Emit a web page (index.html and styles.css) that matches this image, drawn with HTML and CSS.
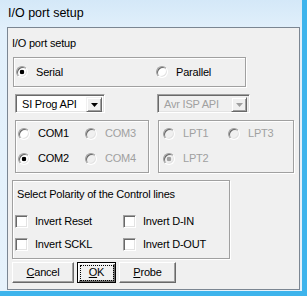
FILE: index.html
```html
<!DOCTYPE html>
<html>
<head>
<meta charset="utf-8">
<title>I/O port setup</title>
<link rel="stylesheet" href="styles.css">
</head>
<body>
<div class="window">
  <div class="titlebar">I/O port setup</div>
  <div class="client">
    <div class="caption">I/O port setup</div>
    <div class="panel mode">
      <div class="opt serial"><span class="radio checked"></span>Serial</div>
      <div class="opt"><span class="radio"></span>Parallel</div>
    </div>
    <div class="combos">
      <div class="combo si">
        <span class="val">SI Prog API</span>
        <span class="cbtn"><svg width="7" height="4" viewBox="0 0 7 4"><path d="M0 0h7L3.5 4z" fill="#000"/></svg></span>
      </div>
      <div class="combo avr disabled">
        <span class="val">Avr ISP API</span>
        <span class="cbtn"><svg width="7" height="4" viewBox="0 0 7 4"><path d="M0 0h7L3.5 4z" fill="#a0a0a0"/></svg></span>
      </div>
    </div>
    <div class="groups">
      <div class="panel ports com">
        <div class="opt"><span class="radio"></span>COM1</div>
        <div class="opt dis"><span class="radio"></span>COM3</div>
        <div class="opt"><span class="radio checked"></span>COM2</div>
        <div class="opt dis"><span class="radio"></span>COM4</div>
      </div>
      <div class="panel ports lpt">
        <div class="opt dis"><span class="radio"></span>LPT1</div>
        <div class="opt dis"><span class="radio"></span>LPT3</div>
        <div class="opt dis"><span class="radio checked"></span>LPT2</div>
      </div>
    </div>
    <div class="panel polarity">
      <div class="ptitle">Select Polarity of the Control lines</div>
      <div class="checks">
        <div class="chk"><span class="box"></span>Invert Reset</div>
        <div class="chk"><span class="box"></span>Invert D-IN</div>
        <div class="chk"><span class="box"></span>Invert SCKL</div>
        <div class="chk"><span class="box"></span>Invert D-OUT</div>
      </div>
    </div>
    <div class="buttons">
      <div class="btn cancel"><span><u>C</u>ancel</span></div>
      <div class="btn ok"><span class="focus"><u>O</u>K</span></div>
      <div class="btn probe"><span><u>P</u>robe</span></div>
    </div>
  </div>
</div>
</body>
</html>
```
FILE: styles.css
```css
* { box-sizing: border-box; }
html, body { margin: 0; padding: 0; }
body {
  width: 307px;
  height: 296px;
  overflow: hidden;
  background: #dcecf8;
  font-family: "Liberation Sans", Arial, sans-serif;
  color: #000;
}
.window {
  width: 307px;
  height: 296px;
  display: flex;
  flex-direction: column;
  padding: 0 2px 1px 7px;
  background: linear-gradient(#d4e8f8, #e2f0fb 30px, #e6f2fb);
  border-right: 5px solid #3eb4ec;
  border-bottom: 5px solid #3eb4ec;
}
.titlebar {
  height: 27px;
  flex: none;
  padding: 6px 0 0 1px;
  font-size: 12.5px;
  line-height: 15px;
}
.client {
  height: 263px;
  flex: none;
  border: 1px solid #7b8692;
  background: #f0f0f0;
  display: flex;
  flex-direction: column;
  align-items: flex-start;
  font-size: 11px;
  line-height: 13px;
  letter-spacing: -0.2px;
}
.caption { margin: 9px 0 0 4px; }
.panel {
  border: 1px solid #a0a0a0;
  box-shadow: inset 1px 1px 0 #fff, 1px 1px 0 #fff;
}
.mode {
  margin: 7px 0 0 5px;
  width: 233px;
  height: 30px;
  display: flex;
  align-items: center;
  padding-left: 2px;
}
.mode .serial { width: 140px; }
.opt { display: flex; align-items: center; white-space: nowrap; }
.opt.dis { color: #a0a0a0; }
.radio {
  flex: none;
  width: 12px;
  height: 12px;
  margin-right: 8px;
  border-radius: 50%;
  border: 1px solid;
  border-color: #a0a0a0 #fff #fff #a0a0a0;
  box-shadow: inset 1px 1px 0 #696969, inset -1px -1px 0 #e3e3e3;
  background: #fff;
}
.radio.checked { background: radial-gradient(circle at center, #000 2px, #fff 2.6px); }
.dis .radio { background: #f0f0f0; }
.dis .radio.checked { background: radial-gradient(circle at center, #a0a0a0 2px, #f0f0f0 2.6px); }
.combos { margin: 7px 0 0 7px; display: flex; gap: 52px; }
.combo {
  height: 19px;
  width: 90px;
  display: flex;
  padding: 2px;
  background: #fff;
  border: 1px solid;
  border-color: #a0a0a0 #fff #fff #a0a0a0;
  box-shadow: inset 1px 1px 0 #696969, inset -1px -1px 0 #e3e3e3;
}
.combo.avr { width: 93px; }
.combo.disabled { background: #f0f0f0; color: #a0a0a0; }
.val { flex: 1; padding-left: 4px; line-height: 14px; white-space: nowrap; }
.cbtn {
  flex: none;
  width: 16px;
  height: 15px;
  display: flex;
  align-items: center;
  justify-content: center;
  background: #f0f0f0;
  border: 1px solid;
  border-color: #f0f0f0 #696969 #696969 #f0f0f0;
  box-shadow: inset 1px 1px 0 #fff, inset -1px -1px 0 #a0a0a0;
}
.cbtn svg { display: block; }
.groups { margin: 7px 0 0 7px; display: flex; gap: 9px; }
.ports {
  height: 53px;
  display: grid;
  grid-template-rows: 25px 25px;
  align-items: center;
}
.com { width: 134px; grid-template-columns: 67px auto; padding-left: 2px; }
.lpt { width: 136px; grid-template-columns: 65px auto; padding-left: 4px; }
.polarity {
  margin: 7px 0 0 4px;
  width: 218px;
  height: 79px;
  padding: 7px 0 0 2px;
}
.ptitle { padding-left: 2px; white-space: nowrap; }
.checks {
  margin-top: 14px;
  display: grid;
  grid-template-columns: 108px auto;
  row-gap: 10px;
}
.chk { display: flex; align-items: center; height: 13px; white-space: nowrap; }
.box {
  flex: none;
  width: 13px;
  height: 13px;
  margin-right: 7px;
  background: #fff;
  border: 1px solid;
  border-color: #a0a0a0 #fff #fff #a0a0a0;
  box-shadow: inset 1px 1px 0 #696969, inset -1px -1px 0 #e3e3e3;
}
.buttons { margin: 3px 0 0 4px; display: flex; gap: 3px; }
.btn {
  height: 21px;
  display: flex;
  align-items: center;
  justify-content: center;
  background: #f0f0f0;
  border: 1px solid;
  border-color: #fff #696969 #696969 #fff;
  box-shadow: inset -1px -1px 0 #a0a0a0;
}
.cancel { width: 62px; }
.probe { width: 57px; }
.ok {
  width: 39px;
  border: 1px solid #000;
  box-shadow: inset 1px 1px 0 #fff, inset -1px -1px 0 #696969, inset -2px -2px 0 #a0a0a0;
}
.focus {
  width: 34px;
  height: 16px;
  border: 1px dotted #000;
  display: flex;
  align-items: center;
  justify-content: center;
}
u { text-decoration: underline; }
```
